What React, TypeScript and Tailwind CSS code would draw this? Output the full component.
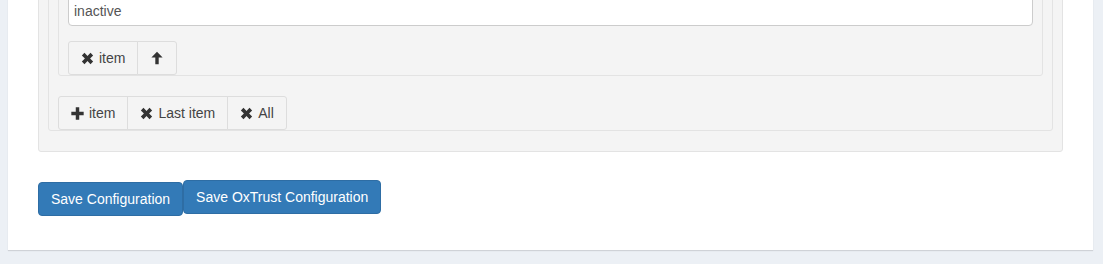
import React from "react";

// glyphicon-like icons
const RemoveIcon = () => (
    <svg width="13" height="13" viewBox="0 0 12 12" className="inline-block align-[-1px]">
        <path d="M0.8 3.2 3.2 0.8 6 3.6 8.8 0.8 11.2 3.2 8.4 6 11.2 8.8 8.8 11.2 6 8.4 3.2 11.2 0.8 8.8 3.6 6Z" fill="#333" />
    </svg>
);

const PlusIcon = () => (
    <svg width="13" height="13" viewBox="0 0 12 12" className="inline-block align-[-1px]">
        <path d="M4.4 0.3h3.2v4.1h4.1v3.2h-4.1v4.1h-3.2v-4.1h-4.1v-3.2h4.1Z" fill="#333" />
    </svg>
);

const ArrowUpIcon = () => (
    <svg width="14" height="14" viewBox="0 0 14 14" className="inline-block align-[-1px]">
        <path d="M7 0.8 12.6 6.6H8.7V13.2H5.3V6.6H1.4Z" fill="#333" />
    </svg>
);

const GroupButton = ({ children, pos }: { children: React.ReactNode; pos: "first" | "mid" | "last" }) => (
    <button
        className={`flex items-center gap-[5px] h-[34px] px-[12px] border border-[#ddd] bg-[#f4f4f4] text-[#444] text-[14px] leading-[20px] ${pos === "first" ? "rounded-l-[3px]" : pos === "last" ? "rounded-r-[3px] -ml-px" : "-ml-px"}`}
    >
        {children}
    </button>
);

export default function App() {
    return (
        <div className="h-[264px] overflow-hidden bg-[#ecf0f5] font-['Liberation_Sans',Arial,sans-serif] text-[14px] text-[#333]">
            <div className="ml-[8px] mr-[10px] -mt-[38px] bg-white shadow-[0_1px_1px_rgba(0,0,0,0.12)] pl-[30px] pr-[30px] pb-[34px]">
                {/* outer well */}
                <div className="border border-[#e3e3e3] bg-[#f4f4f4] rounded-[3px] px-[9px] pt-[9px] pb-[20px]">
                    {/* middle well */}
                    <div className="border border-[#e3e3e3] bg-[#f4f4f4] rounded-[3px] px-[9px] pt-[9px]">
                        {/* inner well */}
                        <div className="border border-[#e3e3e3] bg-[#f4f4f4] rounded-[3px] px-[9px] pt-[9px]">
                            <input
                                readOnly
                                value="inactive"
                                className="block w-full h-[34px] px-[5px] pt-[3px] border border-[#ccc] rounded-[4px] bg-white text-[#555] text-[14px] outline-none"
                            />
                            <div className="flex mt-[15px]">
                                <GroupButton pos="first">
                                    <RemoveIcon /> item
                                </GroupButton>
                                <GroupButton pos="last">
                                    <ArrowUpIcon />
                                </GroupButton>
                            </div>
                        </div>

                        <div className="flex mt-[20px]">
                            <GroupButton pos="first">
                                <PlusIcon /> item
                            </GroupButton>
                            <GroupButton pos="mid">
                                <RemoveIcon /> Last item
                            </GroupButton>
                            <GroupButton pos="last">
                                <RemoveIcon /> All
                            </GroupButton>
                        </div>
                    </div>
                </div>

                <div className="flex items-start mt-[28px]">
                    <button className="mt-[2px] h-[34px] px-[12px] rounded-[4px] border border-[#2e6da4] bg-[#337ab7] text-white text-[14px] leading-[20px]">
                        Save Configuration
                    </button>
                    <button className="h-[34px] px-[12px] rounded-[4px] border border-[#2e6da4] bg-[#337ab7] text-white text-[14px] leading-[20px]">
                        Save OxTrust Configuration
                    </button>
                </div>
            </div>
        </div>
    );
}
